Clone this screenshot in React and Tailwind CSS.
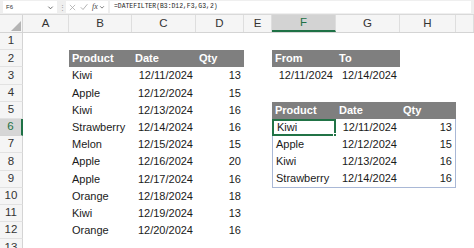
import React from 'react';

const data = [
  ['Kiwi', '12/11/2024', 13],
  ['Apple', '12/12/2024', 15],
  ['Kiwi', '12/13/2024', 16],
  ['Strawberry', '12/14/2024', 16],
  ['Melon', '12/15/2024', 15],
  ['Apple', '12/16/2024', 20],
  ['Apple', '12/17/2024', 16],
  ['Orange', '12/18/2024', 18],
  ['Kiwi', '12/19/2024', 13],
  ['Orange', '12/20/2024', 16],
];

const result = data.slice(0, 4);

const cols = [
  { id: 'A', w: 'w-[46px]' },
  { id: 'B', w: 'w-[63px]' },
  { id: 'C', w: 'w-[64px]' },
  { id: 'D', w: 'w-[48px]' },
  { id: 'E', w: 'w-[28px]' },
  { id: 'F', w: 'w-[64px]' },
  { id: 'G', w: 'w-[64px]' },
  { id: 'H', w: 'w-[56px]' },
  { id: '', w: 'w-[18px]' },
];

const Head = ({ w, children }) => (
  <div className={`${w} h-full shrink-0 flex items-center pl-[3px] bg-[#7f7f7f] text-white font-bold`}>
    {children}
  </div>
);

const Txt = ({ w, children, className = '' }) => (
  <div className={`${w} h-full shrink-0 flex items-center pl-[3px] text-[#1a1a1a] ${className}`}>
    {children}
  </div>
);

const Num = ({ w, children, className = '' }) => (
  <div className={`${w} h-full shrink-0 flex items-center justify-end pr-[3px] text-[#1a1a1a] ${className}`}>
    {children}
  </div>
);

const Empty = ({ w }) => <div className={`${w} h-full shrink-0`} />;

const Chevron = ({ className = '' }) => (
  <svg viewBox="0 0 8 8" className={className} fill="none" stroke="#555" strokeWidth="1">
    <path d="M1.5 3 L4 5.5 L6.5 3" />
  </svg>
);

function FormulaBar() {
  return (
    <div className="h-[15px] flex items-center gap-[2px] bg-[#efefef] border-b border-[#d9d9d9] px-[3px]">
      <div className="w-[54px] h-[12px] bg-white flex items-center justify-between px-[3px]">
        <span className="text-[6px] text-[#333]">F6</span>
        <Chevron className="w-[7px] h-[7px]" />
      </div>
      <span className="text-[7px] text-[#999] w-[5px] text-center">⋮</span>
      <div className="w-[42px] h-[12px] bg-white flex items-center gap-[4px] px-[3px]">
        <svg viewBox="0 0 8 8" className="w-[7px] h-[7px]" stroke="#aaa" strokeWidth="0.9">
          <path d="M1 1 L7 7 M7 1 L1 7" />
        </svg>
        <svg viewBox="0 0 8 8" className="w-[8px] h-[8px]" fill="none" stroke="#aaa" strokeWidth="0.9">
          <path d="M0.8 4.3 L3 6.5 L7.4 1.2" />
        </svg>
        <span className="text-[8px] italic text-[#444] font-['Liberation_Serif',serif]">fx</span>
        <Chevron className="w-[6px] h-[6px] -ml-[3px]" />
      </div>
      <div className="flex-1 h-[12px] bg-white flex items-center pl-[4px]">
        <span className="text-[6.4px] text-[#222] font-['Liberation_Mono',monospace]">=DATEFILTER(B3:D12,F3,G3,2)</span>
      </div>
    </div>
  );
}

function ColumnHeaders() {
  return (
    <div className="h-[18px] flex bg-[#f5f5f5] border-b border-[#d4d4d4]">
      <div className="w-[23px] h-full shrink-0 border-r border-[#d4d4d4] relative">
        <svg viewBox="0 0 10 10" className="absolute right-[1px] bottom-[1px] w-[10px] h-[10px]">
          <path d="M10 0 L10 10 L0 10 Z" fill="#b4b4b4" />
        </svg>
      </div>
      {cols.map((c) => (
        <div
          key={c.w + c.id}
          className={`${c.w} h-full shrink-0 flex items-center justify-center border-r border-[#dedede] text-[11.5px] ${
            c.id === 'F' ? 'bg-[#d3d3d3] text-[#1e7145] border-b-2 border-b-[#1e7145]' : 'text-[#333]'
          }`}
        >
          {c.id}
        </div>
      ))}
    </div>
  );
}

function Row({ r }) {
  const [A, B, C, D, E, F, G, H, I] = cols.map((c) => c.w);
  let left = [<Empty key="b" w={B} />, <Empty key="c" w={C} />, <Empty key="d" w={D} />];
  if (r === 2) {
    left = [
      <Head key="b" w={B}>Product</Head>,
      <Head key="c" w={C}>Date</Head>,
      <Head key="d" w={D}>Qty</Head>,
    ];
  } else if (r >= 3 && r <= 12) {
    const d = data[r - 3];
    left = [
      <Txt key="b" w={B}>{d[0]}</Txt>,
      <Num key="c" w={C}>{d[1]}</Num>,
      <Num key="d" w={D}>{d[2]}</Num>,
    ];
  }

  let right = [<Empty key="f" w={F} />, <Empty key="g" w={G} />, <Empty key="h" w={H} />];
  if (r === 2) {
    right = [
      <Head key="f" w={F}>From</Head>,
      <Head key="g" w={G}>To</Head>,
      <Empty key="h" w={H} />,
    ];
  } else if (r === 3) {
    right = [
      <Num key="f" w={F}>12/11/2024</Num>,
      <Num key="g" w={G}>12/14/2024</Num>,
      <Empty key="h" w={H} />,
    ];
  } else if (r === 5) {
    right = [
      <Head key="f" w={F}>Product</Head>,
      <Head key="g" w={G}>Date</Head>,
      <Head key="h" w={H}>Qty</Head>,
    ];
  } else if (r >= 6 && r <= 9) {
    const d = result[r - 6];
    const bottom = r === 9 ? 'border-b border-b-[#a9b8d6]' : '';
    right = [
      <Txt
        key="f"
        w={F}
        className={`relative ${bottom} ${r === 6 ? 'border-2 border-[#217346]' : 'border-l border-l-[#a9b8d6]'}`}
      >
        {d[0]}
        {r === 6 && <span className="absolute right-[-3px] bottom-[-3px] w-[4px] h-[4px] bg-[#217346] border border-white" />}
      </Txt>,
      <Num key="g" w={G} className={bottom}>{d[1]}</Num>,
      <Num key="h" w={H} className={`${bottom} border-r border-r-[#a9b8d6]`}>{d[2]}</Num>,
    ];
  }

  const sel = r === 6;
  return (
    <div className="h-[17.2px] flex">
      <div
        className={`w-[23px] h-full shrink-0 flex items-center justify-center border-b text-[11.5px] ${
          sel
            ? 'bg-[#d6d6d6] text-[#1e7145] border-r-2 border-r-[#1e7145] border-b-[#d4d4d4]'
            : 'bg-[#f5f5f5] text-[#333] border-r border-r-[#d4d4d4] border-b-[#e2e2e2]'
        }`}
      >
        {r}
      </div>
      <Empty w={A} />
      {left}
      <Empty w={E} />
      {right}
      <Empty w={I} />
    </div>
  );
}

export default function App() {
  return (
    <div className="w-[474px] h-[248px] overflow-hidden bg-white font-['Liberation_Sans',Arial,sans-serif] text-[11px] leading-none">
      <FormulaBar />
      <ColumnHeaders />
      {Array.from({ length: 13 }, (_, i) => (
        <Row key={i} r={i + 1} />
      ))}
    </div>
  );
}
